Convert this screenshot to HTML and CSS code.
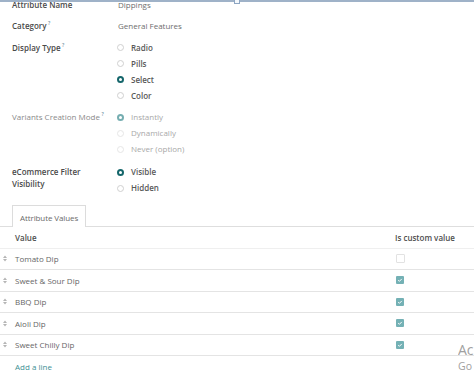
FILE: index.html
```html
<!DOCTYPE html>
<html>
<head>
<meta charset="utf-8">
<link rel="stylesheet" href="styles.css">
</head>
<body>
<div class="page">
  <div class="form">
    <div class="row">
      <div class="label">Attribute Name</div>
      <div class="value">Dippings</div>
    </div>
    <div class="row">
      <div class="label">Category<sup class="help">?</sup></div>
      <div class="value">General Features</div>
    </div>
    <div class="row">
      <div class="label">Display Type<sup class="help">?</sup></div>
      <div class="radios">
        <div class="opt"><span class="radio"></span>Radio</div>
        <div class="opt"><span class="radio"></span>Pills</div>
        <div class="opt"><span class="radio on"></span>Select</div>
        <div class="opt"><span class="radio"></span>Color</div>
      </div>
    </div>
    <div class="row disabled">
      <div class="label">Variants Creation Mode<sup class="help">?</sup></div>
      <div class="radios">
        <div class="opt"><span class="radio on"></span>Instantly</div>
        <div class="opt"><span class="radio"></span>Dynamically</div>
        <div class="opt"><span class="radio"></span>Never (option)</div>
      </div>
    </div>
    <div class="row ecom">
      <div class="label two">eCommerce Filter<br>Visibility</div>
      <div class="radios">
        <div class="opt"><span class="radio on"></span>Visible</div>
        <div class="opt"><span class="radio"></span>Hidden</div>
      </div>
    </div>
  </div>

  <div class="tabs">
    <div class="tab">Attribute Values</div>
  </div>

  <div class="table">
    <div class="thead">
      <div class="c-name">Value</div>
      <div class="c-custom">Is custom value</div>
    </div>
    <div class="tr">
      <div class="c-name"><svg class="handle" width="4" height="7" viewBox="0 0 4 7"><path d="M0 3 L2 0.5 L4 3Z M0 4 L2 6.5 L4 4Z" fill="#b5b5b5"/></svg>Tomato Dip</div>
      <div class="c-custom"><span class="check"></span></div>
    </div>
    <div class="tr">
      <div class="c-name"><svg class="handle" width="4" height="7" viewBox="0 0 4 7"><path d="M0 3 L2 0.5 L4 3Z M0 4 L2 6.5 L4 4Z" fill="#b5b5b5"/></svg>Sweet &amp; Sour Dip</div>
      <div class="c-custom"><span class="check on"><svg width="8" height="8" viewBox="0 0 8 8"><path d="M2.2 4.2 L3.4 5.3 L5.8 2.9" stroke="#fff" stroke-width="1" fill="none"/></svg></span></div>
    </div>
    <div class="tr">
      <div class="c-name"><svg class="handle" width="4" height="7" viewBox="0 0 4 7"><path d="M0 3 L2 0.5 L4 3Z M0 4 L2 6.5 L4 4Z" fill="#b5b5b5"/></svg>BBQ Dip</div>
      <div class="c-custom"><span class="check on"><svg width="8" height="8" viewBox="0 0 8 8"><path d="M2.2 4.2 L3.4 5.3 L5.8 2.9" stroke="#fff" stroke-width="1" fill="none"/></svg></span></div>
    </div>
    <div class="tr">
      <div class="c-name"><svg class="handle" width="4" height="7" viewBox="0 0 4 7"><path d="M0 3 L2 0.5 L4 3Z M0 4 L2 6.5 L4 4Z" fill="#b5b5b5"/></svg>Aioli Dip</div>
      <div class="c-custom"><span class="check on"><svg width="8" height="8" viewBox="0 0 8 8"><path d="M2.2 4.2 L3.4 5.3 L5.8 2.9" stroke="#fff" stroke-width="1" fill="none"/></svg></span></div>
    </div>
    <div class="tr">
      <div class="c-name"><svg class="handle" width="4" height="7" viewBox="0 0 4 7"><path d="M0 3 L2 0.5 L4 3Z M0 4 L2 6.5 L4 4Z" fill="#b5b5b5"/></svg>Sweet Chilly Dip</div>
      <div class="c-custom"><span class="check on"><svg width="8" height="8" viewBox="0 0 8 8"><path d="M2.2 4.2 L3.4 5.3 L5.8 2.9" stroke="#fff" stroke-width="1" fill="none"/></svg></span></div>
    </div>
    <div class="addline">Add a line</div>
  </div>
</div>

<div class="selbar"><span class="selhandle"></span></div>
<div class="watermark"><div class="wm1">Ac</div><div class="wm2">Go</div></div>
</body>
</html>
```

FILE: styles.css
```css
html, body {
  margin: 0;
  padding: 0;
  background: #fff;
  overflow: hidden;
  width: 474px;
  height: 374px;
}
body {
  font-family: "Open Sans", "Noto Sans", sans-serif;
  font-size: 8px;
  color: #555;
  position: relative;
}
.page {
  display: flex;
  flex-direction: column;
}
.form {
  display: flex;
  flex-direction: column;
  gap: 5.5px;
  padding-left: 12px;
  margin-top: -3.5px;
}
.row {
  display: grid;
  grid-template-columns: 105px 1fr;
  line-height: 16px;
}
.label {
  font-weight: 600;
  color: #4a4a4a;
}
.label.two {
  line-height: 12px;
  padding-top: 2px;
}
.help {
  font-size: 5px;
  color: #6f8fa3;
  vertical-align: top;
  line-height: 10px;
  margin-left: 1.5px;
  font-weight: 600;
}
.value {
  color: #6e6e6e;
  padding-left: 1px;
}
.radios {
  display: flex;
  flex-direction: column;
}
.opt {
  display: flex;
  align-items: center;
  font-weight: 600;
  color: #585858;
}
.radio {
  width: 5px;
  height: 5px;
  border: 1px solid #d0d0d0;
  border-radius: 50%;
  margin-right: 7px;
  background: #fff;
  flex: none;
}
.radio.on {
  width: 3px;
  height: 3px;
  border: 2px solid #15666b;
}
.disabled .label {
  font-weight: 400;
  color: #8a8a8a;
}
.disabled .opt {
  font-weight: 400;
  color: #a8a8a8;
}
.disabled .radio {
  border-color: #e6e6e6;
}
.disabled .radio.on {
  border-color: #76aeb1;
}
.ecom {
  margin-top: 1.5px;
}
.tabs {
  margin-top: 9px;
  border-bottom: 1px solid #dedede;
  display: flex;
  padding-left: 12px;
}
.tab {
  border: 1px solid #dcdcdc;
  border-bottom: none;
  padding: 0 7px;
  height: 21px;
  line-height: 23px;
  color: #6a6a6a;
  background: #fff;
  margin-bottom: -1px;
  position: relative;
  letter-spacing: -0.1px;
}
.table {
  display: flex;
  flex-direction: column;
}
.thead, .tr {
  display: grid;
  grid-template-columns: 395px 1fr;
  align-items: center;
}
.thead {
  height: 20.5px;
  font-weight: 600;
  color: #4e4e4e;
  border-bottom: 1px solid #efefef;
}
.tr {
  height: 20.5px;
  border-bottom: 1px solid #e4e4e4;
  color: #666;
}
.c-name {
  padding-left: 15px;
  display: flex;
  align-items: center;
  position: relative;
}
.handle {
  position: absolute;
  left: 3px;
  top: 50%;
  margin-top: -3.5px;
}
.check {
  display: block;
  width: 7px;
  height: 7px;
  border: 1px solid #e2e2e2;
  border-radius: 1px;
  margin-left: 1px;
}
.check.on {
  width: 8px;
  height: 8px;
  border: none;
  background: #74b1b5;
}
.check svg {
  display: block;
}
.addline {
  padding-left: 15px;
  line-height: 22px;
  color: #3e8f94;
}
.selbar {
  position: absolute;
  left: 0;
  top: 0;
  width: 474px;
  height: 2px;
  background: #9fb2c8;
}
.selhandle {
  position: absolute;
  left: 234px;
  top: -2px;
  width: 4px;
  height: 4px;
  border: 1px solid #8ea6c3;
  background: #f4f8fc;
}
.watermark {
  position: absolute;
  left: 458px;
  top: 340px;
  width: 16px;
  overflow: hidden;
  color: #a0a0a0;
  white-space: nowrap;
  font-family: "Open Sans", sans-serif;
}
.wm1 {
  font-size: 14px;
  line-height: 19px;
}
.wm2 {
  font-size: 10.5px;
  line-height: 14px;
}
```
